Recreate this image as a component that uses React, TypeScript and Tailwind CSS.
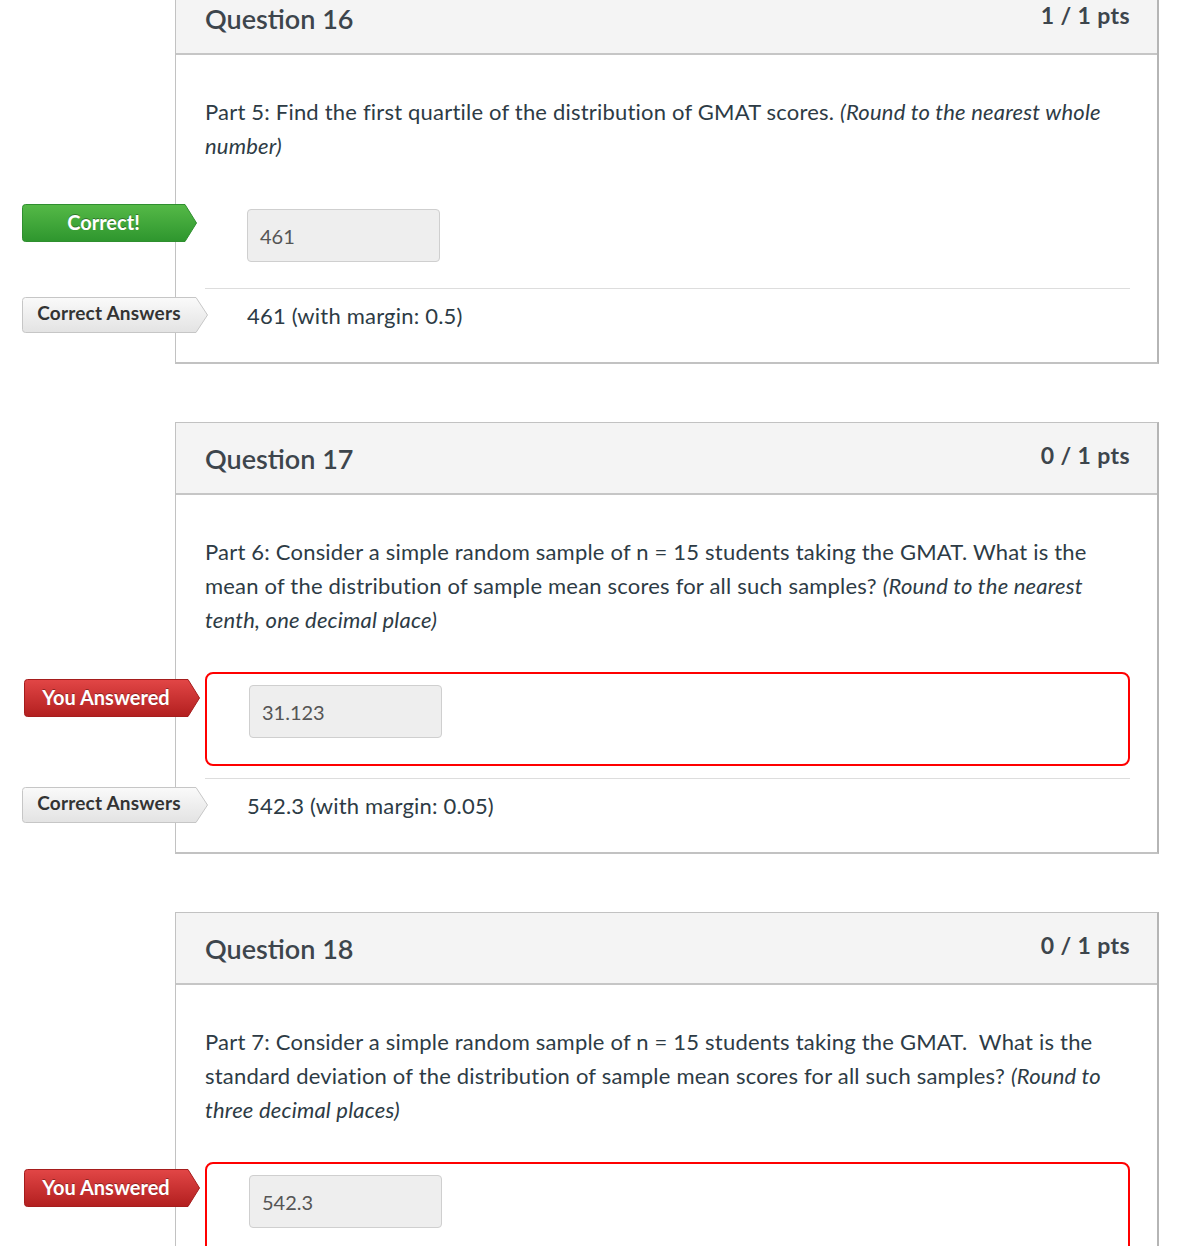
import React from "react";

type Variant = "green" | "red" | "gray";

function Tag({ variant, text, width, height }: { variant: Variant; text: string; width: number; height: number }) {
  const a = 12;
  const r = 3;
  const h = height;
  const w = width;
  const d = `M${r + 0.5},0.5 H${w - a} L${w - 0.5},${h / 2} L${w - a},${h - 0.5} H${r + 0.5} Q0.5,${h - 0.5} 0.5,${h - r - 0.5} V${r + 0.5} Q0.5,0.5 ${r + 0.5},0.5 Z`;
  const id = `g-${variant}`;
  const stops =
    variant === "green"
      ? ["#55b947", "#2e962e"]
      : variant === "red"
      ? ["#e24646", "#b21f1f"]
      : ["#fafafa", "#e3e3e3"];
  const stroke = variant === "green" ? "#2f8f2f" : variant === "red" ? "#a51d1d" : "#c6c6c6";
  return (
    <div className="relative" style={{ width, height }}>
      <svg className="absolute inset-0" width={w} height={h} viewBox={`0 0 ${w} ${h}`}>
        <defs>
          <linearGradient id={id} x1="0" y1="0" x2="0" y2="1">
            <stop offset="0" stopColor={stops[0]} />
            <stop offset="1" stopColor={stops[1]} />
          </linearGradient>
        </defs>
        <path d={d} fill={`url(#${id})`} stroke={stroke} strokeWidth="1" />
      </svg>
      <div
        className={`relative flex h-full items-center justify-center pb-[3px] font-bold ${
          variant === "gray"
            ? "text-[19px] tracking-[0.2px] text-[#333]"
            : "text-[20px] text-white [text-shadow:0_-1px_0_rgba(0,0,0,0.35)]"
        }`}
        style={{ width: w - a }}
      >
        {text}
      </div>
    </div>
  );
}

function InputBox({ value, ml }: { value: string; ml: string }) {
  return (
    <div
      className={`${ml} flex h-[53px] w-[193px] items-center rounded-[4px] border border-[#cfcfcf] bg-[#eeeeee] pl-[12px] text-[20px] text-[#555]`}
    >
      {value}
    </div>
  );
}

function Card({
  num,
  pts,
  lines,
  correct,
  given,
  answer,
}: {
  num: number;
  pts: string;
  lines: React.ReactNode[];
  correct: boolean;
  given: string;
  answer: string;
}) {
  return (
    <div className="w-[984px] shrink-0 border border-b-2 border-r-2 border-[#c2c2c2] border-r-[#b5b5b5] bg-white">
      <div className="flex h-[72px] justify-between border-b-2 border-[#c6c6c6] bg-[#f4f4f4] pl-[29px] pr-[27px]">
        <div className="pt-[19px] text-[27px] font-semibold leading-[34px] text-[#3d454c]">Question {num}</div>
        <div className="pt-[18px] text-[23px] font-bold leading-[28px] tracking-[0.4px] text-[#3d454c]">{pts}</div>
      </div>
      <div className="pl-[29px] pr-[27px] pt-[40px]">
        <p className="whitespace-nowrap text-[22px] leading-[34px] tracking-[0.2px] text-[#2d3b45]">
          {lines.map((l, i) => (
            <React.Fragment key={i}>
              {l}
              {i < lines.length - 1 && <br />}
            </React.Fragment>
          ))}
        </p>
        {correct ? (
          <div className="relative mt-[33px] border-2 border-transparent pb-[24px] pt-[11px]">
            <div className="absolute left-[-185px] top-[6px]">
              <Tag variant="green" text="Correct!" width={175} height={38} />
            </div>
            <InputBox value={given} ml="ml-[40px]" />
          </div>
        ) : (
          <div className="relative mt-[35px]">
            <div className="absolute left-[-181px] top-[7px]">
              <Tag variant="red" text="You Answered" width={176} height={38} />
            </div>
            <div className="rounded-[8px] border-2 border-[#ff0000] pb-[26px] pt-[11px]">
              <InputBox value={given} ml="ml-[42px]" />
            </div>
            <div className="mt-[12px]" />
          </div>
        )}
        <div className="h-px bg-[#dddddd]" />
        <div className="relative pb-[29px] pt-[10px]">
          <div className="absolute left-[-183px] top-[8px]">
            <Tag variant="gray" text="Correct Answers" width={186} height={36} />
          </div>
          <div className="pl-[42px] text-[22px] leading-[34px] tracking-[0.2px] text-[#2d3b45]">{answer}</div>
        </div>
      </div>
    </div>
  );
}

export default function App() {
  return (
    <div className="h-[1246px] w-[1200px] overflow-hidden bg-white font-['Lato','Open_Sans',sans-serif]">
      <div className="mt-[-18px] flex flex-col gap-[58px] pl-[175px]">
        <Card
          num={16}
          pts="1 / 1 pts"
          correct
          given="461"
          answer="461 (with margin: 0.5)"
          lines={[
            <>
              Part 5: Find the first quartile of the distribution of GMAT scores. <em>(Round to the nearest whole</em>
            </>,
            <em>number)</em>,
          ]}
        />
        <Card
          num={17}
          pts="0 / 1 pts"
          correct={false}
          given="31.123"
          answer="542.3 (with margin: 0.05)"
          lines={[
            <>Part 6: Consider a simple random sample of n = 15 students taking the GMAT. What is the</>,
            <>
              mean of the distribution of sample mean scores for all such samples? <em>(Round to the nearest</em>
            </>,
            <em>tenth, one decimal place)</em>,
          ]}
        />
        <Card
          num={18}
          pts="0 / 1 pts"
          correct={false}
          given="542.3"
          answer="542.3 (with margin: 0.05)"
          lines={[
            <>Part 7: Consider a simple random sample of n = 15 students taking the GMAT.&nbsp; What is the</>,
            <>
              standard deviation of the distribution of sample mean scores for all such samples? <em>(Round to</em>
            </>,
            <em>three decimal places)</em>,
          ]}
        />
      </div>
    </div>
  );
}
